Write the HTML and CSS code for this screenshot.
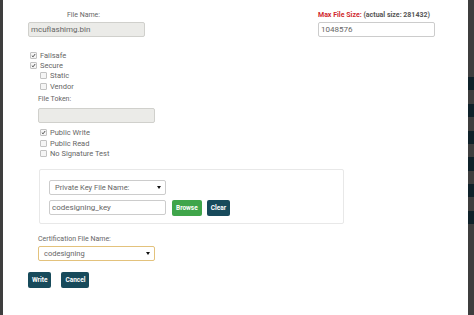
FILE: index.html
```html
<html>
<head>
    <link rel="stylesheet" href="styles.css">
</head>
<body>
<div class="modal">
    <div class="top-row">
        <div class="field name-field">
            <div class="label centered">File Name:</div>
            <input class="input" type="text" value="mcuflashimg.bin" disabled>
        </div>
        <div class="field size-field">
            <div class="label"><span class="warn">Max File Size:</span> <span class="strong">(actual size: 281432)</span></div>
            <input class="input" type="text" value="1048576">
        </div>
    </div>

    <div class="checks">
        <div class="check on"><span class="box"><svg viewBox="0 0 6 6"><path d="M1 3.2 L2.5 4.6 L5 1.2" /></svg></span>Failsafe</div>
        <div class="check on"><span class="box"><svg viewBox="0 0 6 6"><path d="M1 3.2 L2.5 4.6 L5 1.2" /></svg></span>Secure</div>
        <div class="check sub"><span class="box"></span>Static</div>
        <div class="check sub"><span class="box"></span>Vendor</div>
    </div>

    <div class="token">
        <div class="label">File Token:</div>
        <input class="input" type="text" value="" disabled>
    </div>

    <div class="checks access">
        <div class="check on"><span class="box"><svg viewBox="0 0 6 6"><path d="M1 3.2 L2.5 4.6 L5 1.2" /></svg></span>Public Write</div>
        <div class="check"><span class="box"></span>Public Read</div>
        <div class="check"><span class="box"></span>No Signature Test</div>
    </div>

    <div class="panel">
        <div class="select">
            <span>Private Key File Name:</span>
            <svg class="caret" viewBox="0 0 4 3"><path d="M0 0 L4 0 L2 3 Z" /></svg>
        </div>
        <div class="key-row">
            <input class="input key" type="text" value="codesigning_key">
            <button class="btn green">Browse</button>
            <button class="btn">Clear</button>
        </div>
    </div>

    <div class="cert">
        <div class="label">Certification File Name:</div>
        <div class="select focus">
            <span>codesigning</span>
            <svg class="caret" viewBox="0 0 4 3"><path d="M0 0 L4 0 L2 3 Z" /></svg>
        </div>
    </div>

    <div class="actions">
        <button class="btn">Write</button>
        <button class="btn">Cancel</button>
    </div>
</div>

<div class="side">
    <div class="band"></div>
    <div class="band"></div>
    <div class="band"></div>
    <div class="band"></div>
    <div class="band"></div>
    <div class="band"></div>
</div>
</body>
</html>
```

FILE: styles.css
```css
html, body {
    margin: 0;
    height: 100%;
    overflow: hidden;
}

body {
    background: #3e3e3e;
    font-family: Roboto, sans-serif;
    font-size: 7px;
    color: #666;
    display: flex;
}

.modal {
    width: 465px;
    margin-left: 3px;
    background: #fff;
    padding-top: 11px;
    box-sizing: border-box;
}

.top-row {
    display: flex;
    margin-left: 25px;
}

.field {
    width: 117px;
}

.size-field {
    margin-left: 173px;
}

.label {
    line-height: 9px;
    height: 9px;
    margin-bottom: 2px;
    white-space: nowrap;
}

.centered {
    text-align: center;
    padding-right: 6px;
}

.warn {
    color: #d0282d;
    font-weight: bold;
}

.strong {
    font-weight: bold;
    color: #555;
}

.input {
    display: block;
    box-sizing: border-box;
    width: 117px;
    height: 15px;
    margin: 0;
    padding: 0 2px;
    border: 1px solid #cccccc;
    border-radius: 2px;
    background: #fff;
    font-family: Roboto, sans-serif;
    font-size: 8px;
    color: #666;
    outline: none;
}

.input:disabled {
    background: #ebebe8;
    border-color: #d0d0cc;
}

.checks {
    margin-top: 13px;
    margin-left: 27px;
}

.check {
    display: flex;
    align-items: center;
    height: 10.33px;
    font-size: 7.5px;
    white-space: nowrap;
}

.check.sub {
    margin-left: 10px;
}

.box {
    width: 5px;
    height: 5px;
    border: 1px solid #c2c2c2;
    border-radius: 1px;
    background: #f5f5f5;
    margin-right: 3px;
    display: flex;
}

.box svg {
    width: 5px;
    height: 5px;
}

.box path {
    fill: none;
    stroke: #444;
    stroke-width: 1.1;
}

.token {
    margin-top: 3.5px;
    margin-left: 35px;
}

.token .label {
    margin-bottom: 4px;
}

.access {
    margin-top: 5px;
    margin-left: 37px;
}

.panel {
    margin-top: 10px;
    margin-left: 36px;
    width: 305px;
    box-sizing: border-box;
    border: 1px solid #e8e8e8;
    border-radius: 2px;
    padding: 10px 9px 7px;
}

.select {
    box-sizing: border-box;
    width: 117px;
    height: 15px;
    border: 1px solid #cccccc;
    border-radius: 2px;
    padding: 0 4px 0 5px;
    display: flex;
    align-items: center;
    justify-content: space-between;
    font-size: 7.5px;
    color: #666;
}

.select.focus {
    border-color: #e3c27c;
}

.caret {
    width: 4px;
    height: 3px;
}

.caret path {
    fill: #111;
}

.key-row {
    display: flex;
    align-items: center;
    margin-top: 5px;
}

.btn {
    height: 16px;
    margin: 0;
    padding: 0 4px;
    border: none;
    border-radius: 2px;
    background: #174a5b;
    color: #fff;
    font-family: Roboto, sans-serif;
    font-size: 6.5px;
    font-weight: bold;
}

.btn.green {
    background: #3fa54a;
    margin-left: 6px;
    margin-right: 5px;
}

.cert {
    margin-top: 11px;
    margin-left: 35px;
}

.actions {
    display: flex;
    gap: 10px;
    margin-top: 11px;
    margin-left: 25px;
}

.side {
    flex: 1;
    display: flex;
    flex-direction: column;
    gap: 13.5px;
    padding-top: 77px;
}

.band {
    height: 13.3px;
    background: #0f2129;
}
```
